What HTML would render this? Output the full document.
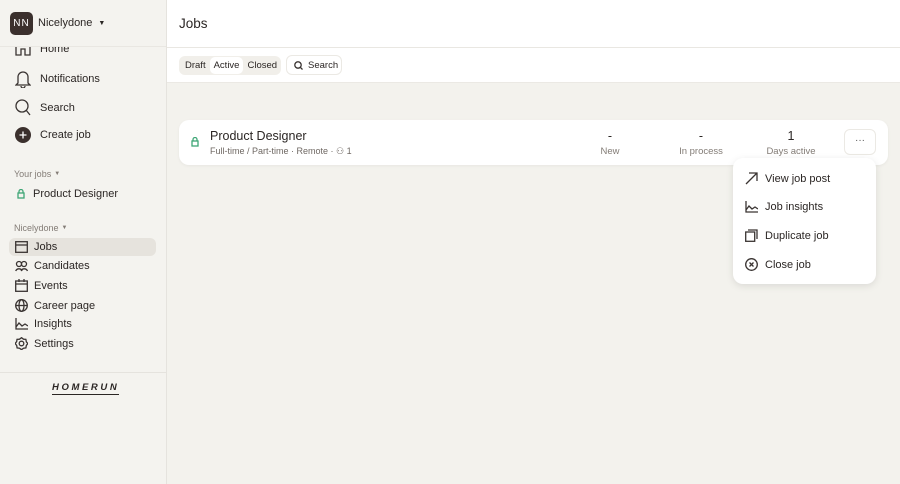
<!DOCTYPE html><html><head><style>
*{box-sizing:border-box;margin:0;padding:0}
body{width:900px;height:484px;overflow:hidden;background:#f3f2ed;font-family:"Liberation Sans",sans-serif;color:#2b2624;position:relative}
.sb{position:absolute;left:0;top:0;width:167px;height:484px;background:#f4f3ef;border-right:1px solid #e5e3de}
.ab{position:absolute;display:flex;align-items:center;font-size:11px}
svg{fill:none;stroke:#3a3432;stroke-width:1.3}
.hd{position:absolute;left:167px;top:0;right:0;height:48px;background:#fff;border-bottom:1px solid #e9e7e2}
.tb{position:absolute;left:167px;top:48px;right:0;height:35px;background:#fff;border-bottom:1px solid #ebe9e4}
.card{position:absolute;left:179px;top:120px;width:709px;height:45px;background:#fff;border-radius:10px;box-shadow:0 1px 3px rgba(0,0,0,.05)}
.menu{position:absolute;left:733px;top:158px;width:143px;height:126px;background:#fff;border-radius:10px;box-shadow:0 2px 8px rgba(0,0,0,.1)}
.mi{position:absolute;left:12px;display:flex;align-items:center;font-size:11px;gap:7px}
.st{position:absolute;text-align:center;width:80px;font-size:12.5px}
.st small{display:block;font-size:9.5px;color:#837c76;margin-top:3px}
.nv{font-size:11px}
</style></head><body>
<div class="sb">
 <div class="ab" style="left:15px;top:42px;gap:9px"><svg width="16" height="14" viewBox="0 0 16 14"><path d="M1 4v9h5V7h4v6h5V4"/></svg>Home</div>
 <div style="position:absolute;left:0;top:0;width:166px;height:47px;background:#f4f3ef;border-bottom:1px solid #e9e7e2"></div>
 <div style="position:absolute;left:10px;top:12px;width:23px;height:23px;border-radius:5px;background:#3b302d;color:#fff;font-size:10px;display:flex;align-items:center;justify-content:center;letter-spacing:1px">NN</div>
 <div class="ab" style="left:38px;top:17px">Nicelydone <span style="font-size:7px;margin-left:6px">▼</span></div>
 <div class="ab" style="left:15px;top:70px;gap:9px"><svg width="16" height="18" viewBox="0 0 16 18"><path d="M3 13V7a5 5 0 0110 0v6l2 2H1zM6 16a2 2 0 004 0"/></svg>Notifications</div>
 <div class="ab" style="left:15px;top:99px;gap:9px"><svg width="16" height="17" viewBox="0 0 16 17"><circle cx="7" cy="7" r="6"/><path d="M11 11l4 5"/></svg>Search</div>
 <div class="ab" style="left:15px;top:127px;gap:9px"><svg width="16" height="16" viewBox="0 0 16 16" style="stroke:#fff"><circle cx="8" cy="8" r="8" fill="#3b302d" stroke="none"/><path d="M8 4.5v7M4.5 8h7"/></svg>Create job</div>
 <div class="ab" style="left:14px;top:169px;font-size:9px;color:#837c76">Your jobs <span style="font-size:6px;margin-left:3px">▼</span></div>
 <div class="ab" style="left:17px;top:188px;gap:8px"><svg width="8" height="10" viewBox="0 0 8 10" style="stroke:#3fa676"><rect x="1" y="4" width="6" height="5"/><path d="M2 4V2.5a2 2 0 014 0V4"/></svg>Product Designer</div>
 <div class="ab" style="left:14px;top:223px;font-size:9px;color:#837c76">Nicelydone <span style="font-size:6px;margin-left:3px">▼</span></div>
 <div style="position:absolute;left:9px;top:238px;width:147px;height:18px;border-radius:6px;background:#e6e3dd"></div>
 <div class="ab nv" style="left:15px;top:241px;gap:6px"><svg width="13" height="12" viewBox="0 0 13 12"><rect x=".7" y=".7" width="11.6" height="10.6"/><path d="M1 4h11"/></svg>Jobs</div>
 <div class="ab nv" style="left:15px;top:260px;gap:6px"><svg width="13" height="12" viewBox="0 0 13 12"><circle cx="4" cy="4" r="2.5"/><circle cx="9" cy="4" r="2.5"/><path d="M0.7 11a3.5 3.5 0 016.5 0M6 11a3.5 3.5 0 016.5 0"/></svg>Candidates</div>
 <div class="ab nv" style="left:15px;top:279px;gap:6px"><svg width="13" height="13" viewBox="0 0 13 13"><rect x=".7" y="2" width="11.6" height="10.3"/><path d="M1 5h11M4 0v3M9 0v3"/></svg>Events</div>
 <div class="ab nv" style="left:15px;top:299px;gap:6px"><svg width="13" height="13" viewBox="0 0 13 13"><circle cx="6.5" cy="6.5" r="5.8"/><ellipse cx="6.5" cy="6.5" rx="2.5" ry="5.8"/><path d="M.7 6.5h11.6"/></svg>Career page</div>
 <div class="ab nv" style="left:15px;top:318px;gap:6px"><svg width="13" height="12" viewBox="0 0 13 12"><path d="M1 0v11h12M1 9l3-4 3 3 3-2 3 2"/></svg>Insights</div>
 <div class="ab nv" style="left:15px;top:337px;gap:6px"><svg width="13" height="13" viewBox="0 0 13 13"><path d="M6.5 .7l2 1.5 2.4.2.4 2.4 1.5 1.7-1.5 2-.4 2.4-2.4.3-2 1.5-2-1.5-2.4-.3L1.7 8.5.2 6.5l1.5-2L2 2.4l2.5-.2z"/><circle cx="6.5" cy="6.5" r="2.3"/></svg>Settings</div>
 <div style="position:absolute;left:0;top:372px;width:166px;border-top:1px solid #e5e3de"></div>
 <div style="position:absolute;left:52px;top:382px;font-size:9.5px;font-weight:bold;font-style:italic;letter-spacing:2.6px;border-bottom:1.5px solid #2b2624;padding-bottom:1px">HOMERUN</div>
</div>
<div class="hd"><div style="position:absolute;left:12px;top:16px;font-size:13.5px">Jobs</div></div>
<div class="tb">
 <div style="position:absolute;left:12px;top:8px;width:102px;height:19px;background:#f1efea;border-radius:6px;font-size:9.5px;display:flex;align-items:center;padding:0 2px">
  <span style="padding:0 4px">Draft</span><span style="padding:3px 4px;background:#fff;border-radius:5px">Active</span><span style="padding:0 4px">Closed</span></div>
 <div style="position:absolute;left:119px;top:7px;width:56px;height:20px;border:1px solid #ebe9e4;border-radius:6px;font-size:9.5px;display:flex;align-items:center;gap:5px;padding-left:7px"><svg width="9" height="9" viewBox="0 0 9 9"><circle cx="4" cy="4" r="3.2"/><path d="M6.3 6.3L8.5 8.5"/></svg>Search</div>
</div>
<div class="card">
 <svg width="8" height="10" viewBox="0 0 8 10" style="position:absolute;left:12px;top:17px;stroke:#3fa676"><rect x="1" y="4" width="6" height="5"/><path d="M2 4V2.5a2 2 0 014 0V4"/></svg>
 <div style="position:absolute;left:31px;top:9px;font-size:12.5px">Product Designer</div>
 <div style="position:absolute;left:31px;top:26px;font-size:9px;color:#6f6863">Full-time / Part-time · Remote · ⚇ 1</div>
 <div class="st" style="left:391px;top:9px">-<small>New</small></div>
 <div class="st" style="left:482px;top:9px">-<small>In process</small></div>
 <div class="st" style="left:572px;top:9px">1<small>Days active</small></div>
 <div style="position:absolute;left:665px;top:9px;width:32px;height:26px;border:1px solid #ebe9e4;border-radius:6px;text-align:center;font-size:10px;line-height:22px;color:#555">···</div>
</div>
<div class="menu">
 <div class="mi" style="top:14px"><svg width="13" height="13" viewBox="0 0 13 13"><path d="M1 12L12 1M4 1h8v8"/></svg>View job post</div>
 <div class="mi" style="top:43px"><svg width="13" height="12" viewBox="0 0 13 12"><path d="M1 0v11h12M1 9l3-4 3 3 3-2 3 2"/></svg>Job insights</div>
 <div class="mi" style="top:71px"><svg width="13" height="13" viewBox="0 0 13 13"><rect x=".7" y="3" width="9" height="9.3"/><path d="M3 1h9v9"/></svg>Duplicate job</div>
 <div class="mi" style="top:100px"><svg width="13" height="13" viewBox="0 0 13 13"><circle cx="6.5" cy="6.5" r="5.8"/><path d="M4.5 4.5l4 4M8.5 4.5l-4 4"/></svg>Close job</div>
</div>
</body></html>
